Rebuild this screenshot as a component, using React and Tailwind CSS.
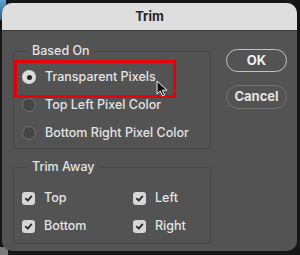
import React from 'react'

function Radio({ checked, label }) {
  return (
    <div className="flex items-center h-[16px]">
      {checked ? (
        <span className="w-[14px] h-[14px] rounded-full bg-[#dcdcdc] flex items-center justify-center">
          <span className="w-[5px] h-[5px] rounded-full bg-[#262626]" />
        </span>
      ) : (
        <span className="w-[14px] h-[14px] rounded-full bg-[#464646] border-[1.5px] border-[#727272]" />
      )}
      <span className="ml-[9px] text-[12.5px] leading-none font-medium text-[#e4e4e4] whitespace-nowrap">{label}</span>
    </div>
  )
}

function Check({ label, width }) {
  return (
    <div className={`flex items-center ${width}`}>
      <span className="w-[13px] h-[13px] rounded-[3px] bg-[#d6d6d6] flex items-center justify-center">
        <svg width="9" height="9" viewBox="0 0 10 10" fill="none" stroke="#2a2a2a" strokeWidth="2" strokeLinecap="round" strokeLinejoin="round">
          <path d="M2 5.2 4.2 7.4 8.2 2.6" />
        </svg>
      </span>
      <span className="ml-[9px] text-[12.5px] leading-none font-medium text-[#e4e4e4]">{label}</span>
    </div>
  )
}

export default function App() {
  return (
    <div className="w-[300px] h-[255px] bg-[#161616] pt-[3px] pl-[2px] relative overflow-hidden font-['Inter',sans-serif]">
      {/* desktop bit at top left */}
      <div className="absolute left-0 top-0 w-[6px] h-[20px] bg-gradient-to-b from-[#5aa6d6] to-[#2d5d80]" />
      <div className="absolute left-0 bottom-0 w-[8px] h-[8px] bg-[#7a7a7a]" />

      <div className="relative w-[295px] h-[248px] rounded-[10px] overflow-hidden bg-[#535353] flex flex-col">
        {/* title bar */}
        <div className="h-[28px] bg-[#dedede] border-b border-[#3a3a3a] flex items-center justify-center">
          <span className="text-[13px] font-bold text-[#262626]">Trim</span>
        </div>

        <div className="flex pl-[11px] pt-[12px]">
          <div className="flex flex-col w-[198px]">
            <fieldset className="border border-[#474747] rounded-[3px] h-[106px] px-[8px] pt-[10px]">
              <legend className="ml-[6px] px-[4px] text-[12.5px] leading-[16px] font-medium text-[#e4e4e4]">Based On</legend>
              <div className="flex flex-col gap-[12px]">
                <Radio checked label="Transparent Pixels" />
                <Radio label="Top Left Pixel Color" />
                <Radio label="Bottom Right Pixel Color" />
              </div>
            </fieldset>

            <fieldset className="mt-[10px] border border-[#474747] rounded-[3px] h-[85px] px-[8px] pt-[17px]">
              <legend className="ml-[6px] px-[4px] text-[12.5px] leading-[16px] font-medium text-[#e4e4e4]">Trim Away</legend>
              <div className="flex flex-col gap-[15px]">
                <div className="flex">
                  <Check label="Top" width="w-[111px]" />
                  <Check label="Left" width="" />
                </div>
                <div className="flex">
                  <Check label="Bottom" width="w-[111px]" />
                  <Check label="Right" width="" />
                </div>
              </div>
            </fieldset>
          </div>

          <div className="ml-[15px] pt-[6px] flex flex-col gap-[13px]">
            <button className="w-[61px] h-[23px] rounded-full border-[1.5px] border-[#c4c4c4] text-[13px] font-bold text-[#efefef] flex items-center justify-center">
              OK
            </button>
            <button className="w-[61px] h-[24px] rounded-full border-[1.5px] border-[#747474] text-[13px] font-bold text-[#e4e4e4] flex items-center justify-center">
              Cancel
            </button>
          </div>
        </div>
      </div>

      {/* highlight rectangle */}
      <div className="absolute left-[14px] top-[60px] w-[162px] h-[38px] border-[3px] border-[#e8000b]" />

      {/* mouse cursor */}
      <svg className="absolute left-[156px] top-[80px]" width="13" height="17" viewBox="0 0 13 17">
        <path d="M1 1 L1 14 L4.2 11 L6.6 16 L8.6 15 L6.3 10.2 L11 10.2 Z" fill="#111" stroke="#f0f0f0" strokeWidth="1" strokeLinejoin="round" />
      </svg>
    </div>
  )
}
